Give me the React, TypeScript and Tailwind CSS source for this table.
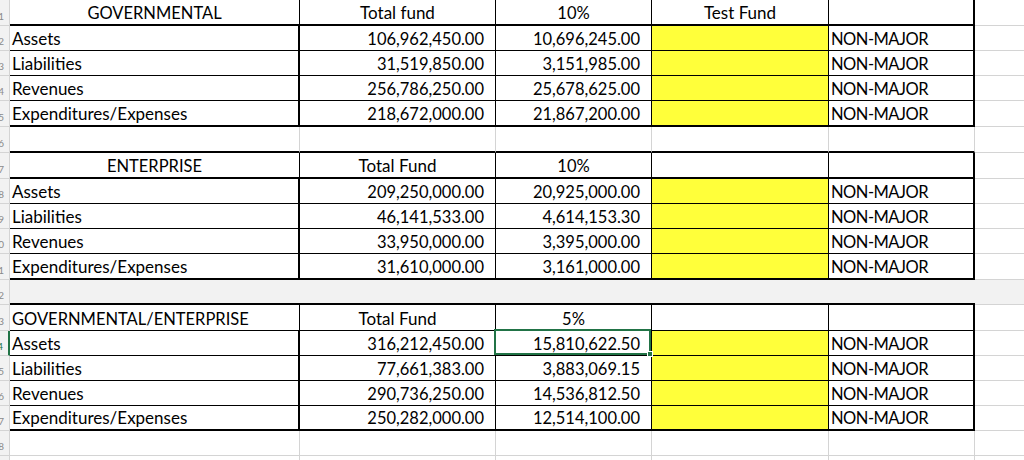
import React from 'react';

type Line = 'none' | 'grid' | 'thin' | 'thick' | 'green';
type Align = 'left' | 'center' | 'right';
type Size = 'label' | 'number' | 'caps' | 'tag';

interface Cell {
  text?: string;
  align?: Align;
  right: Line;
  bottom: Line;
  bg?: string;
  size?: Size;
  selected?: boolean;
}

interface SheetRow {
  n: number;
  h: string;
  fill?: boolean;
  cells: Cell[];
}

const rightLine: Record<Line, string> = {
  none: 'border-r-0',
  grid: 'border-r border-r-[#d4d4d4]',
  thin: 'border-r border-r-black',
  thick: 'border-r-2 border-r-black',
  green: 'border-r-2 border-r-[#217346]'
};

const bottomLine: Record<Line, string> = {
  none: 'border-b-0',
  grid: 'border-b border-b-[#d4d4d4]',
  thin: 'border-b border-b-black',
  thick: 'border-b-2 border-b-black',
  green: 'border-b-2 border-b-[#217346]'
};

const alignClass: Record<Align, string> = {
  left: 'justify-start pl-[2px]',
  center: 'justify-center',
  right: 'justify-end pr-[11px]'
};

// Lato is a bit off Calibri's widths, so sizes differ a little per kind of text
const sizeClass: Record<Size, string> = {
  label: 'text-[17px]',
  number: 'text-[16.5px]',
  caps: 'text-[16.5px]',
  tag: 'text-[16.5px] tracking-[-0.5px]'
};

const YELLOW = 'bg-[#ffff3a]';

const headerRow = (n: number, h: string, title: string, titleAlign: Align, fund: string, pct: string, test: string, bottom: Line): SheetRow => ({
  n,
  h,
  cells: [
    { text: title, align: titleAlign, right: 'thin', bottom, size: 'caps' },
    { text: fund, align: 'center', right: 'thin', bottom, size: 'label' },
    { text: pct, align: 'center', right: 'thin', bottom, size: 'number' },
    { text: test, align: 'center', right: 'thin', bottom, size: 'label' },
    { text: '', right: 'thick', bottom },
    { right: 'none', bottom: 'grid' }
  ]
});

const dataRow = (n: number, h: string, label: string, total: string, pct: string, bottom: Line, selected = false): SheetRow => ({
  n,
  h,
  cells: [
    { text: label, align: 'left', right: 'thick', bottom, size: 'label' },
    { text: total, align: 'right', right: 'thin', bottom, size: 'number' },
    { text: pct, align: 'right', right: 'thin', bottom, size: 'number', selected },
    { right: 'thin', bottom, bg: YELLOW },
    { text: 'NON-MAJOR', align: 'left', right: 'thick', bottom, size: 'tag' },
    { right: 'none', bottom: 'grid' }
  ]
});

const blankRow = (n: number, h: string, bottom: Line, fill = false): SheetRow => ({
  n,
  h,
  fill,
  cells: [0, 1, 2, 3, 4, 5].map((i) => ({
    right: fill || i === 5 ? 'none' : 'grid',
    bottom: i === 5 ? 'grid' : bottom
  })) as Cell[]
});

const rows: SheetRow[] = [
  headerRow(1, 'h-[26px]', 'GOVERNMENTAL', 'center', 'Total fund', '10%', 'Test Fund', 'thick'),
  dataRow(2, 'h-[25px]', 'Assets', '106,962,450.00', '10,696,245.00', 'thin'),
  dataRow(3, 'h-[25px]', 'Liabilities', '31,519,850.00', '3,151,985.00', 'thin'),
  dataRow(4, 'h-[25px]', 'Revenues', '256,786,250.00', '25,678,625.00', 'thin'),
  dataRow(5, 'h-[26px]', 'Expenditures/Expenses', '218,672,000.00', '21,867,200.00', 'thick'),
  blankRow(6, 'h-[26px]', 'thick'),
  headerRow(7, 'h-[26px]', 'ENTERPRISE', 'center', 'Total Fund', '10%', '', 'thick'),
  dataRow(8, 'h-[25px]', 'Assets', '209,250,000.00', '20,925,000.00', 'thin'),
  dataRow(9, 'h-[25px]', 'Liabilities', '46,141,533.00', '4,614,153.30', 'thin'),
  dataRow(10, 'h-[25px]', 'Revenues', '33,950,000.00', '3,395,000.00', 'thin'),
  dataRow(11, 'h-[26px]', 'Expenditures/Expenses', '31,610,000.00', '3,161,000.00', 'thick'),
  blankRow(12, 'h-[25px]', 'thick', true),
  headerRow(13, 'h-[26px]', 'GOVERNMENTAL/ENTERPRISE', 'left', 'Total Fund', '5%', '', 'thin'),
  dataRow(14, 'h-[25px]', 'Assets', '316,212,450.00', '15,810,622.50', 'thin', true),
  dataRow(15, 'h-[25px]', 'Liabilities', '77,661,383.00', '3,883,069.15', 'thin'),
  dataRow(16, 'h-[25px]', 'Revenues', '290,736,250.00', '14,536,812.50', 'thin'),
  dataRow(17, 'h-[25px]', 'Expenditures/Expenses', '250,282,000.00', '12,514,100.00', 'thick'),
  blankRow(18, 'h-[25px]', 'grid'),
  blankRow(19, 'h-[25px]', 'grid')
];

const SELECTED_ROW = 14;

export default function App() {
  return (
    <div className="w-[1024px] h-[460px] overflow-hidden bg-white font-[Lato,sans-serif] text-black">
      {rows.map((row) => {
        const active = row.n === SELECTED_ROW;
        return (
          <div
            key={row.n}
            className={`grid grid-cols-[10px_290px_196px_156px_177px_146px_1fr] ${row.h} ${row.fill ? 'bg-[#f2f2f2]' : ''}`}
          >
            {/* row number, mostly scrolled out of view */}
            <div
              className={`flex items-end justify-end overflow-hidden bg-[#f2f2f2] pr-[5px] pb-[4px] text-[10px] leading-none border-b border-b-[#d4d4d4] ${
                active ? 'border-r-2 border-r-[#217346] text-[#217346]' : 'border-r border-r-[#d4d4d4] text-[#8a8a8a]'
              }`}
            >
              <span className="whitespace-nowrap">{row.n}</span>
            </div>

            {row.cells.map((cell, i) => (
              <div
                key={i}
                className={`relative flex items-end whitespace-nowrap pb-[3px] leading-none ${sizeClass[cell.size ?? 'label']} ${rightLine[cell.right]} ${
                  bottomLine[cell.bottom]
                } ${cell.bg ?? ''} ${alignClass[cell.align ?? 'left']}`}
              >
                {cell.text}
                {cell.selected && (
                  <div className="absolute -left-[2px] -top-[2px] right-0 bottom-0 z-10 border-2 border-[#217346]">
                    <div className="absolute -right-[4px] -bottom-[4px] w-[6px] h-[6px] bg-[#217346] border border-white" />
                  </div>
                )}
              </div>
            ))}
          </div>
        );
      })}
    </div>
  );
}
